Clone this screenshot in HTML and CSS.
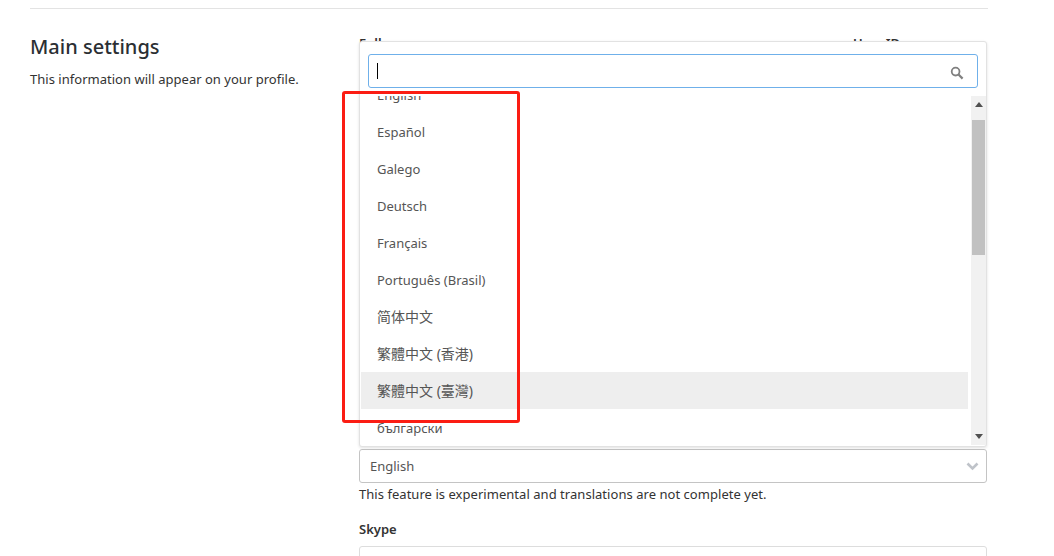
FILE: index.html
```html
<!DOCTYPE html>
<html lang="en">
<head>
    <meta charset="UTF-8">
    <meta name="viewport" content="width=device-width, initial-scale=1.0">
    <title>Profile settings</title>
    <link rel="stylesheet" href="styles.css">
</head>
<body>
    <div class="page">
        <hr class="divider">

        <div class="settings">
            <div class="intro">
                <h2>Main settings</h2>
                <p>This information will appear on your profile.</p>
            </div>

            <div class="fields">
                <div class="name-row">
                    <div class="field-name">
                        <label>Full name</label>
                        <div class="input"></div>
                    </div>
                    <div class="field-id">
                        <label>User ID</label>
                        <div class="input"></div>
                    </div>
                </div>

                <div class="field-language">
                    <div class="select">
                        <span>English</span>
                        <svg class="chevron" width="13" height="9" viewBox="0 0 13 9">
                            <path d="M1.5 1.5 L6.5 6.5 L11.5 1.5" fill="none" stroke="#bfc3c9" stroke-width="2.6"/>
                        </svg>

                        <div class="dropdown">
                            <div class="search">
                                <span class="caret"></span>
                                <svg class="search-icon" width="14" height="14" viewBox="0 0 14 14">
                                    <circle cx="5.6" cy="5.6" r="3.9" fill="none" stroke="#808080" stroke-width="1.8"/>
                                    <path d="M8.5 8.5 L12.6 12.6" stroke="#808080" stroke-width="2.2"/>
                                </svg>
                            </div>
                            <div class="list-wrap">
                                <ul class="list">
                                    <li>English</li>
                                    <li>Español</li>
                                    <li>Galego</li>
                                    <li>Deutsch</li>
                                    <li>Français</li>
                                    <li>Português (Brasil)</li>
                                    <li class="cjk" lang="zh-CN">简体中文</li>
                                    <li class="cjk" lang="zh-TW">繁體中文 (香港)</li>
                                    <li class="cjk active" lang="zh-TW">繁體中文 (臺灣)</li>
                                    <li>български</li>
                                </ul>
                                <div class="scrollbar">
                                    <span class="arrow-up"></span>
                                    <div class="track"><div class="thumb"></div></div>
                                    <span class="arrow-down"></span>
                                </div>
                            </div>
                        </div>
                    </div>
                    <p class="help">This feature is experimental and translations are not complete yet.</p>
                </div>

                <div class="field-skype">
                    <label>Skype</label>
                    <div class="input"></div>
                </div>
            </div>
        </div>
    </div>

    <div class="highlight"></div>
</body>
</html>
```

FILE: styles.css
```css
* {
    box-sizing: border-box;
}

html, body {
    margin: 0;
    height: 100%;
    overflow: hidden;
}

body {
    background: #fff;
    color: #333;
    font-family: "Noto Sans", "Noto Sans CJK SC", sans-serif;
    font-size: 13px;
    position: relative;
}

.page {
    width: 958px;
    margin-left: 30px;
    padding-top: 8px;
}

.divider {
    margin: 0;
    border: 0;
    border-top: 1px solid #e3e3e3;
}

.settings {
    display: flex;
}

.intro {
    width: 329px;
    padding-top: 26px;
}

.intro h2 {
    margin: 0;
    font-size: 20px;
    font-weight: 500;
    line-height: 24px;
    color: #2b2f33;
}

.intro p {
    margin: 10px 0 0;
    line-height: 20px;
    letter-spacing: 0.02px;
    color: #333;
}

.fields {
    width: 628px;
    padding-top: 24px;
}

label {
    display: block;
    font-weight: 600;
    line-height: 20px;
    color: #333;
}

.input {
    height: 34px;
    margin-top: 6px;
    border: 1px solid #ddd;
    border-radius: 3px;
}

.name-row {
    display: flex;
    gap: 16px;
    height: 416px;
}

.field-name {
    width: 478px;
}

.field-id {
    flex: 1;
}

.select {
    position: relative;
    height: 34px;
    padding-left: 10px;
    display: flex;
    align-items: center;
    justify-content: space-between;
    border: 1px solid #c4c4c4;
    border-radius: 3px;
    color: #555;
}

.chevron {
    margin-right: 7px;
}

.help {
    margin: 1px 0 0;
    line-height: 20px;
    letter-spacing: 0.04px;
}

.field-skype {
    margin-top: 15px;
}

.field-skype .input {
    margin-top: 7px;
}

.dropdown {
    position: absolute;
    left: -1px;
    right: -1px;
    bottom: 35px;
    height: 406px;
    background: #fff;
    border: 1px solid #e2e2e2;
    border-radius: 3px;
    box-shadow: 0 1px 3px rgba(0, 0, 0, 0.12);
    z-index: 2;
}

.search {
    position: relative;
    height: 34px;
    margin: 12px 8px 0;
    border: 1px solid #6fb0ea;
    border-radius: 3px;
}

.caret {
    position: absolute;
    left: 8px;
    top: 8px;
    width: 1px;
    height: 16px;
    background: #000;
}

.search-icon {
    position: absolute;
    right: 13px;
    top: 11px;
}

.list-wrap {
    display: flex;
    height: 349px;
    margin-top: 8px;
    overflow: hidden;
}

.list {
    flex: 1;
    margin: -20px 3px 0 1px;
    padding: 0;
    list-style: none;
    color: #555;
}

.list li {
    height: 37px;
    padding-left: 16px;
    line-height: 39px;
}

.list li.cjk {
    font-size: 14px;
    line-height: 37px;
}

.list li.active {
    background: #eee;
}

.scrollbar {
    width: 15px;
    background: #f1f1f1;
    display: flex;
    flex-direction: column;
    align-items: center;
}

.track {
    flex: 1;
    width: 100%;
    padding: 7px 1px 0;
}

.thumb {
    height: 135px;
    background: #c1c1c1;
}

.arrow-up, .arrow-down {
    flex: none;
    width: 0;
    height: 0;
    margin: 6px 0;
    border-left: 4px solid transparent;
    border-right: 4px solid transparent;
}

.arrow-up {
    border-bottom: 5px solid #505050;
}

.arrow-down {
    border-top: 5px solid #505050;
}

.highlight {
    position: absolute;
    left: 342px;
    top: 91px;
    width: 178px;
    height: 332px;
    border: 3px solid #fb1d13;
    border-radius: 3px;
    z-index: 5;
}
```
